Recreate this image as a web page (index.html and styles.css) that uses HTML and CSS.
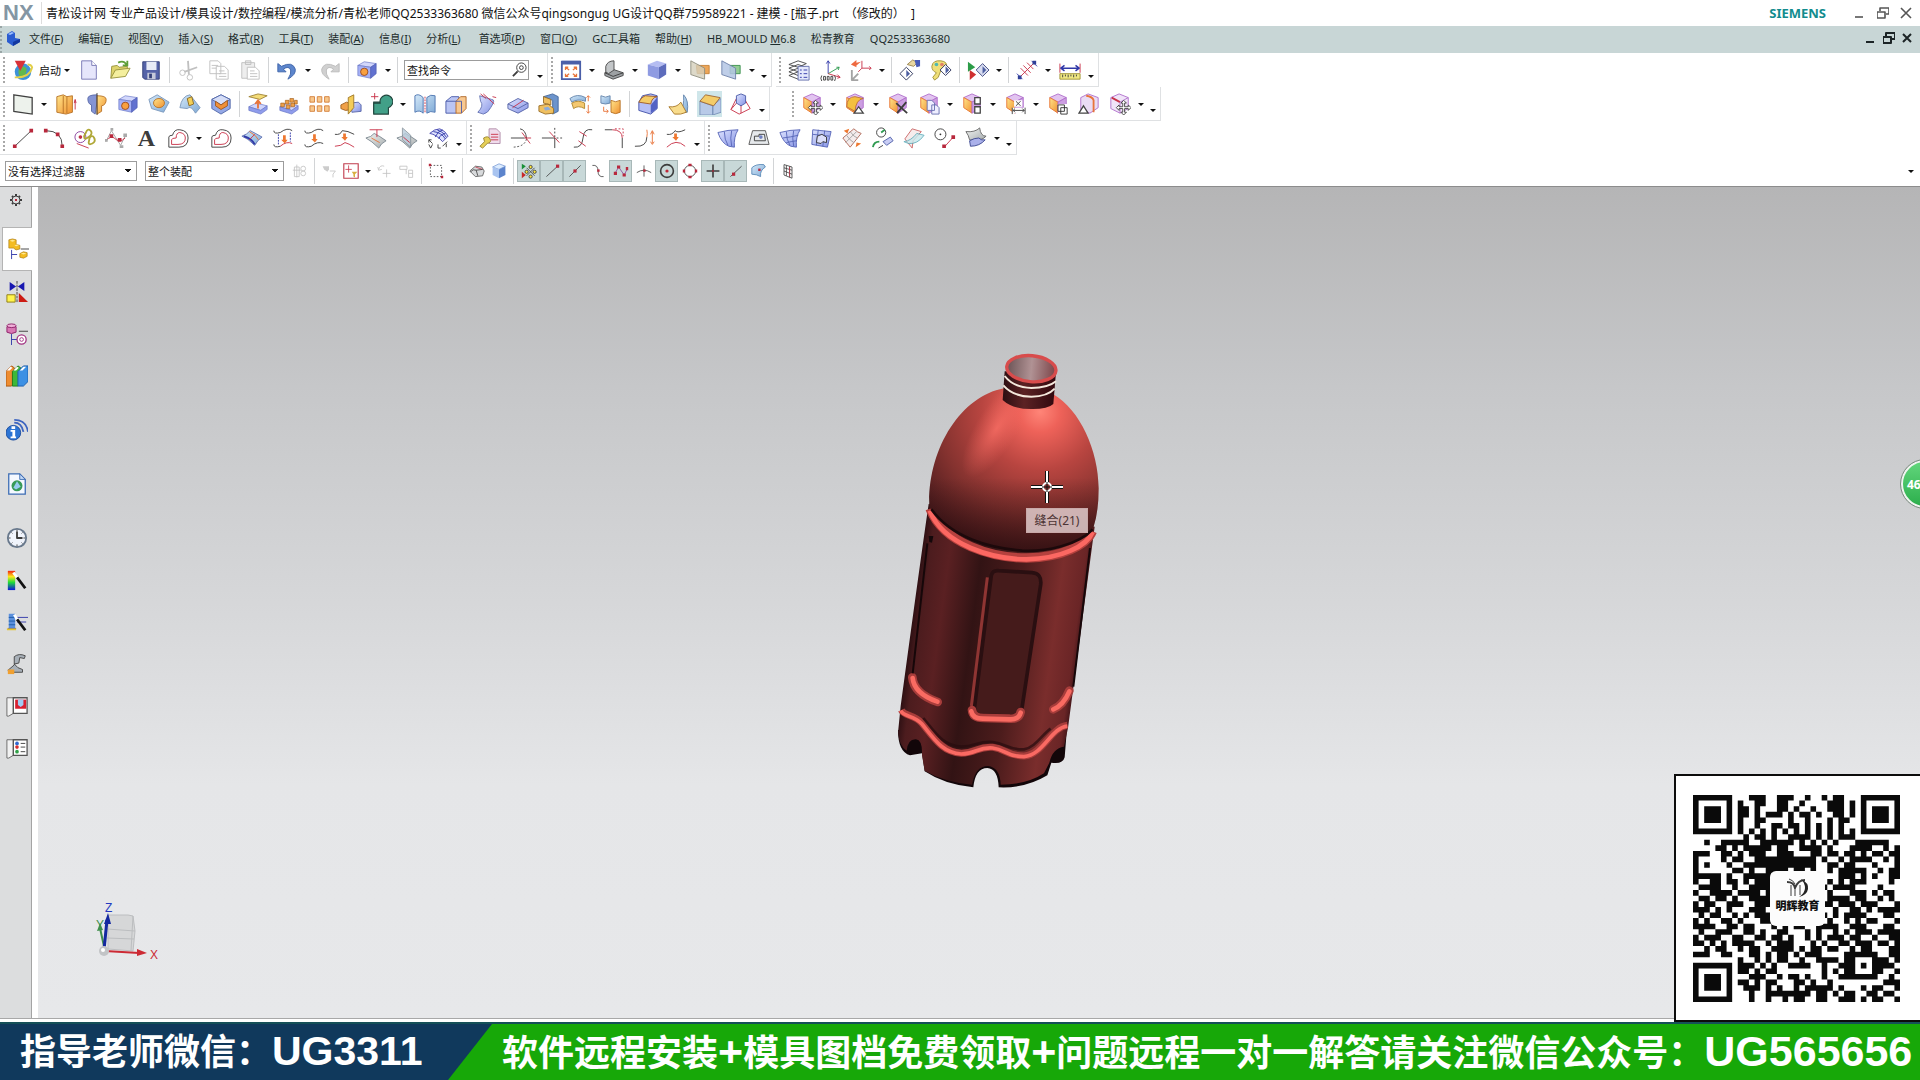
FILE: index.html
```html
<!DOCTYPE html>
<html lang="zh-CN">
<head>
<meta charset="utf-8">
<title>NX - 建模 - 瓶子.prt</title>
<link rel="stylesheet" href="styles.css">
</head>
<body>
<svg class="defs" aria-hidden="true">
  <defs>
    <linearGradient id="gBlue" x1="0" y1="0" x2="1" y2="1"><stop offset="0" stop-color="#dfe4ff"/><stop offset="1" stop-color="#8492e4"/></linearGradient>
    <linearGradient id="gOrange" x1="0" y1="0" x2="1" y2="1"><stop offset="0" stop-color="#ffe58a"/><stop offset="1" stop-color="#f09030"/></linearGradient>
    <linearGradient id="gSky" x1="0" y1="0" x2="1" y2="1"><stop offset="0" stop-color="#d4e8f8"/><stop offset="1" stop-color="#7faad6"/></linearGradient>
    <linearGradient id="gGrey" x1="0" y1="0" x2="1" y2="1"><stop offset="0" stop-color="#f4f6f4"/><stop offset="1" stop-color="#a4aaac"/></linearGradient>
    <linearGradient id="gRainbow" x1="0" y1="0" x2="0" y2="1"><stop offset="0" stop-color="#f02010"/><stop offset=".3" stop-color="#ffe81c"/><stop offset=".6" stop-color="#20dc38"/><stop offset="1" stop-color="#1010e0"/></linearGradient>
  </defs>
  <symbol id="cube" viewBox="0 0 24 24"><path fill="#d2d7fc" stroke="#6674c4" stroke-width=".7" d="M2 7 9 3l13 2-6 4z"/><path fill="#a6b1f6" stroke="#6674c4" stroke-width=".7" d="m2 7 14 2v12L2 18z"/><path fill="#6272d0" stroke="#4c5ab0" stroke-width=".7" d="m16 9 6-4v11l-6 5z"/></symbol>
  <symbol id="hex" viewBox="0 0 24 24"><path fill="#e2c4f0" stroke="#b070cc" d="m12 1 9 4-9 5-9-5z"/><path fill="url(#gOrange)" stroke="#e87838" d="m3 5 9 5v12l-9-6z"/><path fill="#cc9ee2" stroke="#b070cc" d="m12 10 9-5v11l-9 6z"/></symbol>
  <symbol id="slab" viewBox="0 0 24 24"><path fill="#d0d5fc" stroke="#6674c4" stroke-width=".7" d="m2 15 8-4 12 3-7 5z"/><path fill="#8f9cec" stroke="#6674c4" stroke-width=".7" d="m2 15 13 4 7-5v4l-7 5-13-4z"/></symbol>
  <symbol id="move" viewBox="0 0 24 24"><path fill="#fff" stroke="#444" d="m16 8 3 3h-2v4h4v-2l3 3-3 3v-2h-4v4h2l-3 3-3-3h2v-4h-4v2l-3-3 3-3v2h4v-4h-2z"/></symbol>
</svg>

<header class="titlebar">
  <span class="nx">NX</span>
  <h1 class="caption">青松设计网 专业产品设计/模具设计/数控编程/模流分析/青松老师QQ2533363680 微信公众号qingsongug UG设计QQ群759589221 - 建模 - [瓶子.prt  （修改的）  ]</h1>
  <span class="brand">SIEMENS</span>
  <div class="winbtns">
    <button title="最小化"><svg viewBox="0 0 12 12"><path class="ln" d="M1 10h8"/></svg></button>
    <button title="还原"><svg viewBox="0 0 12 12"><path class="ln" d="M3 4V1h9v6H9M0 5h8v6H0z"/></svg></button>
    <button title="关闭"><svg viewBox="0 0 12 12"><path class="ln" d="m1 1 10 10M11 1 1 11"/></svg></button>
  </div>
</header>

<nav class="menubar">
  <svg class="part" viewBox="0 0 16 16"><path fill="#2b5cd0" d="m2 4 5-3 3 2v5l5 1v3l-7 4-6-4z"/><path fill="#9ec0ff" d="m3 4 4-2 2 1-4 2z"/><path fill="#1438a0" d="m10 11 5-2v3l-7 4v-4z"/></svg>
  <button>文件(<u>F</u>)</button><button>编辑(<u>E</u>)</button><button>视图(<u>V</u>)</button><button>插入(<u>S</u>)</button><button>格式(<u>R</u>)</button><button>工具(<u>T</u>)</button><button>装配(<u>A</u>)</button><button>信息(<u>I</u>)</button><button class="wide">分析(<u>L</u>)</button><button>首选项(<u>P</u>)</button><button>窗口(<u>O</u>)</button><button>GC工具箱</button><button>帮助(<u>H</u>)</button><button>HB_MOULD <u>M</u>6.8</button><button>松青教育</button><button>QQ2533363680</button>
  <div class="winbtns dark">
    <button title="最小化窗口"><svg viewBox="0 0 12 12"><path class="ln" d="M1 10h8"/></svg></button>
    <button title="还原窗口"><svg viewBox="0 0 12 12"><path class="ln" d="M3 4V1h9v6H9M0 5h8v6H0z"/></svg></button>
    <button title="关闭窗口"><svg viewBox="0 0 12 12"><path class="ln" d="m2 2 8 8M10 2l-8 8"/></svg></button>
  </div>
</nav>

<div class="bars">
  <div class="row">
    <div class="toolbar">
      <i class="grip"></i>
      <button class="start"><svg viewBox="0 0 24 24"><circle cx="12" cy="14" r="9" fill="#3d92d8"/><path fill="#62b84c" d="M8 9q6-3 8 2 0 6-5 10-6-3-3-12z"/><path fill="none" stroke="#e3cf48" stroke-width="2" d="M3 20q16 1 19-11-1-3-5-3"/><path fill="#d83238" d="m3 2 12 0-6 11z"/></svg><span>启动</span></button><button class="drop" title="启动菜单"></button>
      <button class="tool" title="新建"><svg viewBox="0 0 24 24"><path fill="#e6e6fb" stroke="#7676b4" d="M4 2h11l5 5v15H4z"/><path fill="#fff" stroke="#7676b4" d="M15 2v5h5"/></svg></button>
      <button class="tool" title="打开"><svg viewBox="0 0 24 24"><path fill="#ded46c" stroke="#97933c" d="M2 21 3 8l6-1 2 2 9-1v4"/><path fill="#f4ef9e" stroke="#97933c" d="m2 21 5-9 16-2-5 9z"/><path fill="none" stroke="#5d9e38" stroke-width="2" d="M10 4q6-3 9 2m1-4v5h-5"/></svg></button>
      <button class="tool" title="保存"><svg viewBox="0 0 24 24"><path fill="#5563a8" stroke="#333f78" d="M3 3h18v19H5l-2-2z"/><path fill="#e8ecf6" d="M7 3h11v9H7z"/><path fill="#c5c9da" d="M8 15h9v7H8z"/><path fill="#333f78" d="M10 16h3v5h-3z"/></svg></button>
      <i class="sep"></i>
      <button class="tool off" title="剪切"><svg viewBox="0 0 24 24"><circle class="ln" cx="6" cy="15" r="3"/><circle class="ln" cx="14" cy="20" r="3"/><path class="ln" stroke-width="2" d="m8 14 14-5M13 17 12 2"/></svg></button>
      <button class="tool off" title="复制"><svg viewBox="0 0 24 24"><path fill="#fff" class="ol" d="M2 2h9l3 3v11H2zM9 8h9l4 4v10H9z"/><path class="ln" d="M4 7h7M4 10h5M12 13h6M12 16h8M12 19h8"/></svg></button>
      <button class="tool off" title="粘贴"><svg viewBox="0 0 24 24"><path fill="#eee" class="ol" d="M3 4h14v17H3zM7 2h6v4H7z"/><path fill="#fff" class="ol" d="M9 9h9l4 4v9H9z"/><path class="ln" d="M12 13h5M12 16h8M12 19h8"/></svg></button>
      <i class="sep"></i>
      <button class="tool" title="撤消"><svg viewBox="0 0 24 24"><path fill="#5d86cc" stroke="#3c62a8" d="M2 5v9h9L8 11q6-4 8 1 1 4-3 10 9-5 8-11Q18 2 6 8z"/></svg></button><button class="drop" title="撤消列表"></button>
      <button class="tool off" title="重做"><svg viewBox="0 0 24 24"><path fill="#d0d0d0" stroke="#bbb" d="M22 5v9h-9l3-3q-6-4-8 1-1 4 3 10-9-5-8-11Q6 2 18 8z"/></svg></button>
      <i class="sep"></i>
      <button class="tool" title="特征"><svg viewBox="0 0 24 24"><use href="#cube"/><circle cx="9" cy="14" r="4" fill="#f8a040" stroke="#9a4a20"/></svg></button><button class="drop" title="特征列表"></button>
      <i class="sep"></i>
      <label class="search"><input type="text" value="查找命令" aria-label="查找命令"><svg viewBox="0 0 16 16"><circle class="ln" cx="10" cy="6" r="5"/><circle class="ln" cx="10" cy="6" r="2"/><path class="ln" stroke-width="2" d="m6 10-5 5"/></svg></label>
      <button class="drop more" title="工具条选项"></button>
    </div>
    <div class="toolbar">
      <i class="grip"></i>
      <button class="tool" title="适合窗口"><svg viewBox="0 0 24 24"><path fill="#fff" stroke="#4a5ea8" stroke-width="2" d="M2 3h20v19H2z"/><path fill="#4a5ea8" d="M2 2h20v4H2z"/><path class="ln or" stroke-width="1.4" d="M6 12V9h3M15 9h3v3M18 16v3h-3M9 19H6v-3M6 9l4 3M18 9l-4 3M18 19l-4-3M6 19l4-3"/></svg></button><button class="drop" title="缩放"></button>
      <button class="tool" title="定向视图"><svg viewBox="0 0 24 24"><path fill="#9da1a4" stroke="#484848" d="m2 15 8-4 12 4v3l-11 4-9-4z"/><path fill="#c3c6c8" stroke="#484848" d="M3 14V8q2-6 9-6v10l-6 4z"/><path class="ln" d="m2 15 9 4 11-4"/></svg></button><button class="drop" title="视图方向"></button>
      <button class="tool" title="着色"><svg viewBox="0 0 24 24"><path fill="#b5bdf2" d="m2 6 10-4 10 3-8 4z"/><path fill="#8f9be2" d="m2 6 12 3v13L2 18z"/><path fill="#5d6cbc" d="m14 9 8-4v12l-8 5z"/></svg></button><button class="drop" title="渲染样式"></button>
      <button class="tool" title="剪切截面"><svg viewBox="0 0 24 24"><path fill="#eda658" stroke="#c78238" d="M8 7h14v9H9z"/><path fill="#d4d0bc" fill-opacity=".8" stroke="#908f80" d="m2 2 15 8v12L2 17z"/></svg></button>
      <button class="tool" title="编辑截面"><svg viewBox="0 0 24 24"><path fill="#92cd92" stroke="#3c9050" d="M11 7h11v9H11z"/><path fill="#b4c6e4" fill-opacity=".85" stroke="#7082aa" d="m2 2 15 8v12L2 17z"/></svg></button><button class="drop" title="截面列表"></button>
      <button class="drop more" title="工具条选项"></button>
    </div>
    <div class="toolbar apart">
      <i class="grip"></i>
      <button class="tool" title="图层设置"><svg viewBox="0 0 24 24"><path fill="#fff" stroke="#484848" d="m1 18 10-4 9 3-9 5zM1 14l10-4 9 3-9 5zM1 10l10-4 9 3-9 5zM1 6l10-4 9 3-9 4z"/><path fill="#e4e8fc" stroke="#6570ac" d="M11 8h12v15H11z"/><path class="ln bl" d="M13 12h2m2 0h4M13 16h2m2 0h4M13 20h2m2 0h4"/></svg></button>
      <button class="tool" title="WCS"><svg viewBox="0 0 24 24"><path class="ln bl" d="M10 16V2m-2 3 2-3 2 3"/><path class="ln gn" d="m10 16 12-7m-3 0h3l-1 3"/><path class="ln rd" d="m10 16 13 4m-3-3 3 3-3 1"/><path class="ln" d="M3 18q-2 3 0 6M17 18q2 3 0 6M5 19v4h2v-4zM9 19v4h2v-4zM13 19v4h2v-4z"/></svg></button>
      <button class="tool" title="定向 WCS"><svg viewBox="0 0 24 24"><path class="ln rd" d="M13 10V2m0 8h10m-2-2 2 2-2 2M13 10l-4 4"/><path fill="#ee6a40" d="m1 6 6-5v3l5-1-5 4v2z"/><path class="ln gy" stroke-width="2" d="M2 12v11h7M2 23l7-7"/></svg></button><button class="drop" title="WCS 列表"></button>
      <i class="sep"></i>
      <button class="tool" title="显示"><svg viewBox="0 0 24 24"><path fill="#fff" stroke="#283058" d="m8 9 7 7-7 7-7-7z"/><path fill="#4c5ea0" d="m8 12 4 4-4 4z"/><path fill="#ead8a0" stroke="#9a8450" d="m9 6 6-5 5 3-4 4z"/><path fill="#4a5cb8" d="m17 1 6 0v7l-4 1z"/></svg></button>
      <button class="tool" title="编辑对象显示"><svg viewBox="0 0 24 24"><path fill="#efdf78" stroke="#a09038" d="M2 8Q3 1 12 2q7 1 6 6l-6 4-3 8-4 3-2-3 4-5Q2 13 2 8z"/><circle cx="7" cy="6" r="2" fill="#50b8b0"/><circle cx="13" cy="6" r="2" fill="#e08068"/><path fill="#fff" stroke="#283058" d="m17 6 6 6-6 6-6-6z"/><path fill="#4c5ea0" d="m17 8 4 4-4 4z"/></svg></button>
      <i class="sep"></i>
      <button class="tool" title="移动对象"><svg viewBox="0 0 24 24"><path fill="#2c9c48" d="m1 3 8 6-8 5z"/><path fill="#cf3030" d="m3 12 7 5-7 6z"/><path fill="#d8dcf0" stroke="#404880" d="m17 5 7 7-7 7-7-7z"/><path fill="#4c5ea0" d="m17 8 4 4-4 4z"/></svg></button><button class="drop" title="移动列表"></button>
      <i class="sep"></i>
      <button class="tool" title="测量距离"><svg viewBox="0 0 24 24"><path class="ln rd" d="m5 19 15-15M5 10l8 8M8 7l8 8M12 4l7 7"/><path class="ln bl" d="m1 16 6 6m10-20 6 6"/><path fill="#304098" d="M2 18h4v4H2zM18 2h4v4h-4z"/></svg></button><button class="drop" title="测量列表"></button>
      <button class="tool" title="尺寸"><svg viewBox="0 0 24 24"><path fill="#f0e884" stroke="#a09434" d="M1 16h22v6H1z"/><path class="ln" d="M4 17v3m3-3v2m3-2v3m3-3v2m3-2v3m3-3v2"/><path class="ln rd" d="M1 5v10M23 5v10"/><path class="ln bl" stroke-width="1.6" d="M3 10h18M6 7l-4 3 4 3m12-6 4 3-4 3"/></svg></button>
      <button class="drop more" title="工具条选项"></button>
    </div>
  </div>

  <div class="row">
    <div class="toolbar">
      <i class="grip"></i>
      <button class="tool" title="草图"><svg viewBox="0 0 24 24"><path fill="#edf2ec" stroke="#404040" stroke-width="1.4" d="m2 2 20 3v18L2 20z"/></svg></button><button class="drop" title="草图列表"></button>
      <button class="tool" title="拉伸"><svg viewBox="0 0 24 24"><path fill="url(#gOrange)" stroke="#b87428" d="m2 4 7-2 4 2 6-1v18l-7 2-10-2z"/><path stroke="#b87428" d="M9 3v19M13 4v18"/><path class="ln rd" d="M22 18V8m-1 3 1-4 1 4"/></svg></button>
      <button class="tool" title="旋转"><svg viewBox="0 0 24 24"><path fill="#8494d4" stroke="#5a6aa8" d="M2 6q0-4 10-4v8l-2 13-4-3V13q-4-1-4-7z"/><path fill="url(#gOrange)" stroke="#b87428" d="M12 3q10 0 10 4 0 6-5 7v6l-5 3z"/><path class="ln" d="M12 0v24"/></svg></button>
      <button class="tool" title="孔"><svg viewBox="0 0 24 24"><use href="#cube"/><circle cx="9" cy="14" r="4" fill="#f8a040" stroke="#9a4a20"/></svg></button>
      <button class="tool" title="凸台"><svg viewBox="0 0 24 24"><path fill="url(#gSky)" stroke="#7c98bc" d="m1 7 9-5 13 8-6 11-13-4z"/><ellipse cx="12" cy="11" rx="6" ry="5" fill="url(#gOrange)" stroke="#b87428"/></svg></button>
      <button class="tool" title="垫块"><svg viewBox="0 0 24 24"><path fill="url(#gSky)" stroke="#7c98bc" d="M1 16Q3 3 12 2l11 14-5 6q-5-9-9-5z"/><path fill="#f4d058" stroke="#8a6820" d="m9 6 5-2 2 8-5 2z"/></svg></button>
      <button class="tool" title="腔体"><svg viewBox="0 0 24 24"><path fill="#94a8e6" stroke="#5066a8" d="m2 7 10-5 10 5v10l-10 6-10-6z"/><path fill="#d6def8" stroke="#5066a8" d="m2 7 10-5 10 5-10 6z"/><path fill="#f09038" stroke="#a05820" d="m6 9 6 4 7-5v6l-7 4-6-4z"/></svg></button>
      <i class="sep"></i>
      <button class="tool" title="拔模体"><svg viewBox="0 0 24 24"><use href="#slab"/><path fill="#f4dc78" stroke="#a08438" d="m2 4 10-3 10 2-8 4z"/><path class="ln or" stroke-width="2" d="M12 17V9M9 12l3-4 3 4"/></svg></button>
      <button class="tool" title="凸起阵列"><svg viewBox="0 0 24 24"><use href="#slab"/><path fill="#f0a048" stroke="#a06020" stroke-width=".7" d="M3 11h4v4H3zM8 8h4v4H8zM13 6h4v4h-4zM9 13h4v4H9zM14 11h4v4h-4zM18 8h3v4h-3z"/></svg></button>
      <button class="tool" title="阵列特征"><svg viewBox="0 0 24 24"><path fill="#f8c88c" stroke="#d4803c" d="M1 4h5v6H1zM9 4h5v6H9zM17 4h5v6h-5zM1 14h5v6H1zM9 14h5v6H9zM17 14h5v6h-5z"/></svg></button>
      <button class="tool" title="镜像特征"><svg viewBox="0 0 24 24"><path fill="url(#gBlue)" stroke="#5866a8" d="m12 11 8-1 3 3v7l-10 1z"/><path fill="#f0a048" stroke="#a06020" d="m1 13 6-3 6 2v6l-7 1-5-2z"/><path fill="#f4cc58" stroke="#a07828" d="m9 5 6-3v14l-6 7z"/></svg></button>
      <button class="tool" title="求和"><svg viewBox="0 0 24 24"><path fill="#42a088" stroke="#20443c" stroke-width="1.2" d="M3 10h8v12H3z"/><path fill="#42a088" stroke="#20443c" stroke-width="1.2" d="M3 11h7a7 7 0 1 1 9 5v7H3z"/><path class="ln rd" d="M4 0v7M0 4h8"/></svg></button><button class="drop" title="布尔运算"></button>
      <button class="tool" title="缝合"><svg viewBox="0 0 24 24"><path fill="url(#gSky)" stroke="#4c74b0" d="M1 3q4-3 9 2v17q-4-4-9-1zM14 5q4-4 9-2v18q-5-2-9 1z"/><path class="ln rd" stroke-dasharray="2 1" d="M12 4v18"/></svg></button>
      <button class="tool" title="分割面"><svg viewBox="0 0 24 24"><path fill="#bac5f4" stroke="#4c5ca8" d="M1 9 7 4h8v14l-3 4H1z"/><path fill="#f8c890" stroke="#b06828" d="m12 9 5-5h6v13l-5 5h-6z"/><path stroke="#4c5ca8" d="M1 9h17M18 9v13"/></svg></button>
      <button class="tool" title="修剪体"><svg viewBox="0 0 24 24"><path fill="url(#gBlue)" stroke="#6674b4" d="m4 3 13 4q5 0-1 9-3 6-8 7l-6-2q7-7 3-12z"/><path class="ln rd" d="m8 1 12 11M5 1l6 5M18 4l4 1"/></svg></button>
      <button class="tool" title="拆分体"><svg viewBox="0 0 24 24"><path fill="url(#gBlue)" stroke="#5866a8" d="m1 12 11-6 11 5v5l-11 6-11-5z"/><path stroke="#5866a8" d="m1 12 11 5 11-6" fill="none"/><path class="ln rd" d="m6 16 12-8"/></svg></button>
      <button class="tool" title="抽壳"><svg viewBox="0 0 24 24"><path fill="#6c94cc" stroke="#44689c" d="m6 4 10-3 6 3v16l-6 3V8z"/><path fill="#f0c060" stroke="#9a7028" d="m6 4 8 3v6l-8-2zM1 14l10-2 6 5v5l-9 1-7-3z"/><path fill="#8cacdc" d="m6 16 5-1 3 3-6 1z"/></svg></button>
      <button class="tool" title="加厚"><svg viewBox="0 0 24 24"><path fill="url(#gSky)" stroke="#6484ac" d="M1 6q8-6 17-1v4Q9 6 3 10z"/><path fill="#f4c870" stroke="#b08830" d="M3 11q7-4 14 0v6q-7-4-12 0z"/><path class="ln or" d="M21 3v6m0 4v9m-2-2 2 2 2-2m-4-15 2-2 2 2"/></svg></button>
      <button class="tool" title="包容"><svg viewBox="0 0 24 24"><path fill="url(#gSky)" stroke="#6484ac" d="M1 3q5 3 10 0v8q-5 2-10 0z"/><path fill="url(#gOrange)" stroke="#b87428" d="M12 8q5 3 10 0v13q-5 3-10 0z"/><path class="ln or" d="M4 15v5h5m-2-2 2 2-2 2"/></svg></button>
      <i class="sep"></i>
      <button class="tool" title="边倒圆"><svg viewBox="0 0 24 24"><path fill="#b5bff6" stroke="#4452a8" d="m2 10 4-7 9-2 7 2v14l-7 6-13-4z"/><path fill="#f4cc68" stroke="#a05c28" d="M2 10Q5 4 9 3l13 1q-6 1-7 8z"/><path fill="#5362c4" d="m15 13 7-8v12l-7 5z"/></svg></button>
      <button class="tool" title="面倒圆"><svg viewBox="0 0 24 24"><path fill="url(#gSky)" stroke="#6484ac" d="M17 2q6 6 4 19l-8 0q5-6 4-19z"/><path fill="#f8dc8c" stroke="#a87828" d="M1 15q9 1 13-5l6 11q-6 3-13 2z"/></svg></button>
      <button class="tool picked" title="倒斜角"><svg viewBox="0 0 24 24"><path fill="#b8cae8" stroke="#7890b8" d="M1 9v15h14V14zM15 14v10l9-3V6z"/><path fill="#f4cc68" stroke="#a06838" d="m1 9 6-7 16 3-7 9z"/></svg></button>
      <button class="tool" title="拔模"><svg viewBox="0 0 24 24"><path class="ln rd" d="M7 6 1 18l9 5 12-6-6-10M8 10l-7 8M12 13v9"/><path fill="url(#gBlue)" stroke="#4c5ca8" d="m7 3 5-2 5 2v8l-5 3-5-3z"/></svg></button>
      <button class="drop more" title="工具条选项"></button>
    </div>
    <div class="toolbar far">
      <i class="grip"></i>
      <button class="tool" title="移动面"><svg viewBox="0 0 24 24"><use href="#hex"/><use href="#move"/></svg></button><button class="drop" title="移动面列表"></button>
      <button class="tool" title="调整圆角"><svg viewBox="0 0 24 24"><use href="#hex"/><path fill="#f4c040" stroke="#c07038" d="M3 15Q3 4 12 4l9 2q-8 1-9 14z"/><path fill="#fff" stroke="#444" stroke-width="1.4" d="m16 15 5 7H11z"/></svg></button><button class="drop" title="圆角列表"></button>
      <button class="tool" title="删除面"><svg viewBox="0 0 24 24"><use href="#hex"/><path class="ln" stroke-width="2" d="m10 11 12 11M21 10 11 22"/></svg></button>
      <button class="tool" title="复制面"><svg viewBox="0 0 24 24"><use href="#hex"/><path fill="#eef" stroke="#6870b0" d="M10 8h5l3 3v8h-8zM15 13h5l3 3v7h-8z"/></svg></button><button class="drop" title="复制面列表"></button>
      <button class="tool" title="设为共面"><svg viewBox="0 0 24 24"><use href="#hex"/><path fill="#fff" stroke="#444" stroke-width="1.4" d="M15 5h6v7h-6zM15 15h6v7h-6z"/></svg></button><button class="drop" title="共面列表"></button>
      <button class="tool" title="线性尺寸"><svg viewBox="0 0 24 24"><use href="#hex"/><path fill="#fff" d="M11 8h9v7h-9zM9 16h14v6H9z"/><path class="ln" d="m13 9 5 5m0-5-5 5M9 16v7m14-7v7M10 19h12m-10-2-2 2 2 2m8-4 2 2-2 2"/></svg></button><button class="drop" title="尺寸列表"></button>
      <button class="tool" title="组合面"><svg viewBox="0 0 24 24"><use href="#hex"/><path fill="#fff" d="M12 12h10v11H12z"/><path fill="none" stroke="#333" d="M12 13h7v7h-7zM15 16h7v7h-7z"/></svg></button>
      <button class="tool" title="优化面"><svg viewBox="0 0 24 24"><path fill="#eadcf4" stroke="#b070cc" d="m3 5 8-4 11 4v11l-9 6-10-4z"/><path class="ln or" stroke-width="2" d="M9 3q7 1 8 5v13"/><path fill="#fff" stroke="#444" stroke-width="1.4" d="m6 14 5 8H1z"/></svg></button>
      <button class="tool" title="移动边"><svg viewBox="0 0 24 24"><path fill="#f0e4f8" stroke="#b070cc" d="m2 5 9-4 10 4v12l-9 5-10-5z"/><path class="ln rd" stroke-width="2" d="m3 5 9 5"/><path stroke="#b070cc" d="M12 10v12m0-12 9-5"/><use href="#move"/></svg></button><button class="drop" title="移动边列表"></button>
      <button class="drop more" title="工具条选项"></button>
    </div>
  </div>

  <div class="row">
    <div class="toolbar">
      <i class="grip"></i>
      <button class="tool" title="直线"><svg viewBox="0 0 24 24"><path class="ln" d="M3 21 21 4"/><path class="dot" d="M1 19h4v4H1zM19 2h4v4h-4z"/></svg></button>
      <button class="tool" title="圆弧"><svg viewBox="0 0 24 24"><path class="ln" d="M3 4q18 0 18 17"/><path class="dot" d="M1 2h4v4H1zM14 6h4v4h-4zM19 19h4v4h-4z"/></svg></button>
      <button class="tool" title="关联曲线"><svg viewBox="0 0 24 24"><circle cx="7" cy="11" r="6" class="ln pu"/><circle cx="7" cy="11" r="2" fill="#c03048"/><path fill="none" stroke="#b0a838" stroke-width="2" d="M13 6q2-5 5-2t-2 7-5-1zM17 12q3-4 5 0t-2 6-4-1z"/><path class="ln rd" d="m3 18 13 5"/></svg></button>
      <button class="tool" title="艺术样条"><svg viewBox="0 0 24 24"><path class="ln gy" d="m1 16 6-12 10 16 6-12"/><path class="ln rd" d="M1 15q6-6 9-3 6 6 12 0"/><path class="dot" d="M5 8h4v4H5zM14 12h4v4h-4z"/><path fill="#aaa" d="M6 1h3v3H6zM20 7h4v4h-4zM16 20h4v3h-4zM0 13h3v3H0z"/></svg></button>
      <button class="tool letter" title="文本">A</button>
      <button class="tool" title="偏置曲线"><svg viewBox="0 0 24 24"><path class="ln" d="M2 22V11q0-2 4-2 2-7 8-6 9 1 9 9 0 10-10 10z"/><path class="ln rd" d="M5 19v-5q0-2 5-2 0-6 4-6 6 1 6 6 0 7-8 7z"/></svg></button><button class="drop" title="偏置列表"></button>
      <button class="tool" title="面内偏置"><svg viewBox="0 0 24 24"><path class="ln" d="M2 22V11q0-2 4-2 2-7 8-6 9 1 9 9 0 10-10 10z"/><path class="ln rd" d="M5 19v-5q0-2 5-2 0-6 4-6 6 1 6 6 0 7-8 7z"/></svg></button>
      <button class="tool" title="在面上偏置"><svg viewBox="0 0 24 24"><path fill="url(#gSky)" stroke="#6674b4" d="M1 10q6-2 9-6 6 3 13 7-5 3-8 9Q7 12 1 10z"/><path class="ln or" d="M9 5q8 4 10 9"/><path class="ln bl" stroke-width="2" d="M3 10q9 3 12 9"/><path class="ln rd" d="m9 14 6-6"/></svg></button>
      <button class="tool" title="桥接曲线"><svg viewBox="0 0 24 24"><path class="ln" d="M2 4q0 4 7 2 8-6 13-2M2 19q0 4 7 2"/><path class="ln rd" d="M9 21q7-6 13-3"/><path class="ln bl" stroke-dasharray="2 1" d="M7 8v11M20 6v10"/><path fill="#ee7830" d="M12 9h3v5h2l-3 4-4-4h2z"/></svg></button>
      <button class="tool" title="投影曲线"><svg viewBox="0 0 24 24"><path class="ln" d="M2 4q0 4 7 2 8-6 13-2M2 19q0 4 7 2 7-6 13-3"/><path fill="#ee7830" d="M11 8h3v5h2l-3 4-4-4h2z"/></svg></button>
      <button class="tool" title="组合投影"><svg viewBox="0 0 24 24"><path class="ln" d="M1 8q6 1 8-4 6 0 13 4"/><path class="ln rd" d="M1 21q7 0 11-4 4 1 10 5"/><path fill="#ee7830" d="M10 7h3v4h2l-3 4-4-4h2z"/></svg></button>
      <button class="tool" title="投影到面"><svg viewBox="0 0 24 24"><path fill="url(#gGrey)" stroke="#7c8890" d="M1 12q6-1 9-5 6 3 13 8-6 3-8 8-8-8-14-11z"/><path class="ln or" d="m7 12 9 5"/><path class="ln rd" d="M5 3h14M13 3v8"/></svg></button>
      <button class="tool" title="相交曲线"><svg viewBox="0 0 24 24"><path fill="url(#gGrey)" stroke="#7c8890" d="M1 12q6-1 9-5 6 3 13 8-6 3-8 8-8-8-14-11z"/><path fill="#b8ccdc" stroke="#7c8890" d="m7 1 9 8v13l-9-8z" opacity=".8"/><path class="ln rd" d="m8 11 7 6"/></svg></button>
      <button class="tool" title="等参数曲线"><svg viewBox="0 0 24 24"><path fill="#dce0fc" stroke="#4848b0" d="M3 7Q8 2 14 2q6 2 9 8l-6 6Q10 8 3 7z"/><path class="ln bl" d="M7 5q9 1 13 8M11 3q7 2 10 8M9 11q2-6 8-8M13 13q1-5 7-6"/><path class="ln" d="m2 14 4 4m-4-1v-3h3M22 16l-5 5m4 1v-4M2 19l2 4 2-4M12 19v4h3"/></svg></button>
      <button class="drop more" title="工具条选项"></button>
    </div>
    <div class="toolbar">
      <i class="grip"></i>
      <button class="tool" title="编辑参数"><svg viewBox="0 0 24 24"><path fill="#f0dcec" stroke="#b08ca8" d="M11 2h8l4 4v12H11z"/><path class="ln rd" d="M13 8h8m-8 3h8m-8 3h8"/><path fill="#e6cf58" stroke="#9a8430" d="M5 12q5-3 7 1t-3 5l-5 5-3-2 5-5z"/></svg></button>
      <button class="tool" title="修剪曲线"><svg viewBox="0 0 24 24"><path class="ln" d="M1 12h15M11 2q6 1 7 10"/><path class="ln" stroke-dasharray="2 2" d="M18 13q-2 9-16 9"/><path class="ln rd" d="M16 12h7M13 6l9 12"/></svg></button>
      <button class="tool" title="修剪拐角"><svg viewBox="0 0 24 24"><path class="ln" d="M1 12h14M15 12v11"/><path class="ln" stroke-dasharray="2 2" d="M15 1v10m2 1h6"/><path class="ln rd" d="m9 5 11 12"/></svg></button>
      <button class="tool" title="分割曲线"><svg viewBox="0 0 24 24"><path class="ln" d="M2 22q9 1 10-10T22 3"/><path class="ln rd" d="m7 15 8 6M8 5l8 5"/></svg></button>
      <button class="tool" title="圆角"><svg viewBox="0 0 24 24"><path class="ln" d="M2 3h8M21 12v11"/><path class="ln rd" d="M10 3q11 0 11 9"/><path class="ln rd" stroke-dasharray="2 2" d="M13 2h9v8"/></svg></button>
      <button class="tool" title="拉长曲线"><svg viewBox="0 0 24 24"><path class="ln" d="M1 21q13 1 13-10"/><path class="ln or" d="M14 11q1-4 0-8M20 5v13m-2-10 2-4 2 4m-4 8 2 3 2-3"/></svg></button>
      <button class="tool" title="光顺样条"><svg viewBox="0 0 24 24"><path class="ln" d="M2 8q6 1 9-4 3 3 11-1"/><path class="ln rd" d="M2 22q10-10 20-1"/><path fill="#ee7830" d="M10 7h3v4h2l-3 4-4-4h2z"/></svg></button>
      <button class="drop more" title="工具条选项"></button>
    </div>
    <div class="toolbar">
      <i class="grip"></i>
      <button class="tool" title="直纹"><svg viewBox="0 0 24 24"><path fill="url(#gBlue)" stroke="#5866b8" d="M1 6q11-3 22-3-5 8-4 19l-6-1Q5 18 1 6z"/><path stroke="#5866b8" fill="none" d="M8 5q0 9 4 15M16 4q-2 8 0 17"/></svg></button>
      <button class="tool" title="有界平面"><svg viewBox="0 0 24 24"><path fill="#e6e9ec" stroke="#555" d="m5 4 14 0 4 15H1z"/><path class="ln" d="M7 15v-5h5V8h6l1 7z"/><circle cx="14" cy="11" r="2" fill="#7080c0"/></svg></button>
      <button class="tool" title="通过曲线网格"><svg viewBox="0 0 24 24"><path fill="url(#gBlue)" stroke="#5866b8" d="M1 6q11-3 22-3-5 8-4 19l-6-1Q5 18 1 6z"/><path stroke="#5866b8" fill="none" d="M8 5q0 9 4 15M16 4q-2 8 0 17M4 12q9-1 17-3M8 17q5-1 11-2"/></svg></button>
      <button class="tool" title="N 边曲面"><svg viewBox="0 0 24 24"><path fill="url(#gBlue)" stroke="#5866b8" d="m3 3 20 2-4 17-17-3z"/><path stroke="#5866b8" d="m3 8 18 2M9 3 7 20m9-16-2 17"/><path fill="#dcdffa" stroke="#333" d="m7 17 1-7 5-2 5 3v6l-4-1-2 2z"/></svg></button>
      <button class="tool" title="扫掠"><svg viewBox="0 0 24 24"><path fill="#f4ecec" stroke="#b06858" d="M2 12 14 2q4 4 8 5L10 22q-5-6-8-10z"/><path class="ln gy" d="M6 9q4 6 8 8M10 5q4 6 8 7M5 17 17 5"/><path fill="#ee7830" d="m3 4 6-2-2 5zM22 18l-6 4 1-5z"/></svg></button>
      <button class="tool" title="剖切曲面"><svg viewBox="0 0 24 24"><circle class="ln" cx="10" cy="6" r="5"/><path class="ln gn" stroke-width="2" d="m10 6 4-3M1 22q1-6 7-6"/><path fill="#c8ccf4" stroke="#5060a8" d="m12 16 8-5 3 4-7 5z"/><path class="ln" d="m7 23 5-3"/></svg></button>
      <button class="tool" title="延伸曲面"><svg viewBox="0 0 24 24"><path fill="#f6ecec" stroke="#cc6868" d="m2 13 8-11 10 3-9 10-1 8z"/><path fill="#c8e8ec" stroke="#48a0b0" opacity=".8" d="M6 18q10 1 17-9l-8-2Q9 15 1 16z"/></svg></button>
      <button class="tool" title="圆角曲面"><svg viewBox="0 0 24 24"><circle class="ln" cx="7" cy="8" r="6"/><circle cx="7" cy="8" r="1" fill="#333"/><path class="ln rd" d="m12 21 9-10"/><path class="dot" d="M9 19h4v4H9zM19 9h4v4h-4z"/></svg></button>
      <button class="tool" title="偏置曲面"><svg viewBox="0 0 24 24"><path fill="url(#gGrey)" stroke="#666" d="M1 5q10 1 15-4 1 9 7 9-5 6-18 4-1-5-4-9z"/><path fill="#aab0ea" stroke="#3c4890" d="M5 15q5-3 10-3 3 3 7 2-6 7-16 7z"/></svg></button><button class="drop" title="偏置曲面列表"></button>
      <button class="drop more" title="工具条选项"></button>
    </div>
  </div>

  <div class="row selection">
    <select aria-label="选择过滤器"><option>没有选择过滤器</option></select>
    <select class="scope" aria-label="选择范围"><option>整个装配</option></select>
    <button class="mini off" title="装配约束"><svg viewBox="0 0 20 20"><path class="ln" d="M3 5h6v12H3zM1 9h10M6 2v16"/><circle class="ln" cx="14" cy="7" r="3"/><circle class="ln" cx="14" cy="13" r="3"/></svg></button>
    <i class="sep"></i>
    <button class="mini off" title="重置过滤器"><svg viewBox="0 0 20 20"><path fill="#ccc" d="M2 4h8v4l-2 3-4-3z"/><path class="ln" d="M11 10h7l-3 4v4"/></svg></button>
    <button class="mini" title="类选择"><svg viewBox="0 0 20 20"><path fill="#fff" stroke="#c03c4c" stroke-width="1.4" d="M1 1h18v18H1z"/><path class="ln rd" d="M7 3v9M3 8h8"/><path fill="#d8b040" d="M11 11h7l-3 3v4l-2-1v-3z"/></svg></button><button class="drop" title="类选择列表"></button>
    <button class="mini off" title="细节过滤"><svg viewBox="0 0 20 20"><path class="ln" d="M2 8q2-6 7-4m-8 1 1 4 4-1M12 8v10M7 13h10"/></svg></button>
    <button class="mini off" title="全不选"><svg viewBox="0 0 20 20"><path class="ln" d="M1 4h9v4H1zM12 9h5v9h-5zM12 13h5M9 8v6"/></svg></button>
    <i class="sep"></i>
    <button class="mini" title="矩形选择"><svg viewBox="0 0 20 20"><path class="ln" stroke-dasharray="2 2" d="M3 3h14v14H3z"/><path class="dot" d="M1 1h3v3H1zM16 16h3v3h-3z"/></svg></button><button class="drop" title="选择手势"></button>
    <i class="sep"></i>
    <button class="mini" title="高亮隐藏边"><svg viewBox="0 0 20 20"><path fill="#d8dadc" stroke="#555" d="M1 10 8 4l8 1 3 5-2 6-9 1z"/><path class="ln rd" d="m8 5 9 3"/><path class="ln" d="M2 11q3-4 7-2l2 7M9 9l8-1"/></svg></button>
    <button class="mini" title="着色高亮"><svg viewBox="0 0 20 20"><path fill="#dcecff" stroke="#7c9cd4" d="m2 5 8-4 8 3-8 4z"/><path fill="#a9c4f0" d="m2 5 8 3v11l-8-4z"/><path fill="#5c84cc" d="m10 8 8-4v11l-8 4z"/></svg></button>
    <i class="sep"></i>
    <button class="mini snap on" title="启用捕捉点"><svg viewBox="0 0 20 20"><path fill="#189038" d="m1 1 5 3-5 4z"/><path fill="#c82828" d="m1 11 5 4-5 4z"/><path class="ln" d="m7 6 10 10m0-10L7 16"/><circle cx="12" cy="5" r="2" class="yel"/><circle cx="7" cy="11" r="2" class="yel"/><circle cx="17" cy="11" r="2" class="yel"/><circle cx="12" cy="17" r="2" class="yel"/></svg></button><button class="mini snap on" title="端点"><svg viewBox="0 0 20 20"><path class="ln" d="M3 17 17 4"/><path class="dot" d="M15 2h4v4h-4z"/></svg></button><button class="mini snap on" title="中点"><svg viewBox="0 0 20 20"><path class="ln" d="M3 17 17 3"/><path class="dot" d="M8 8h4v4H8z"/></svg></button><button class="mini snap" title="控制点"><svg viewBox="0 0 20 20"><path class="ln" d="M3 3q7-1 7 7t7 7"/><path class="dot" d="M9 8h3v3H9z"/></svg></button><button class="mini snap on" title="极点"><svg viewBox="0 0 20 20"><path class="ln pu" d="m2 14 5-9 7 10 4-8"/><path class="dot" d="M1 11h4v4H1zM5 3h4v4H5zM12 13h4v4h-4zM16 5h3v4h-3z"/></svg></button><button class="mini snap" title="交点"><svg viewBox="0 0 20 20"><path class="ln" d="M1 12q9-6 18 0M10 3v14"/><path class="dot" d="M9 8h3v3H9z"/></svg></button><button class="mini snap on" title="圆心"><svg viewBox="0 0 20 20"><circle class="ln" cx="10" cy="10" r="8" stroke-width="2"/><circle cx="10" cy="10" r="2" fill="#c02838"/></svg></button><button class="mini snap" title="象限点"><svg viewBox="0 0 20 20"><circle class="ln" cx="10" cy="10" r="7"/><path class="dot" d="M8 1h4v3H8zM8 16h4v3H8zM1 8h3v4H1zM16 8h3v4h-3z"/></svg></button><button class="mini snap on" title="现有点"><svg viewBox="0 0 20 20"><path class="ln" stroke-width="2" d="M10 2v16M2 10h16"/><path class="dot" d="M9 9h2v2H9z"/></svg></button><button class="mini snap on" title="曲线上的点"><svg viewBox="0 0 20 20"><path class="ln" d="M3 17 17 4"/><path class="dot" d="M5 12h4v4H5z"/></svg></button><button class="mini snap" title="面上的点"><svg viewBox="0 0 20 20"><path fill="url(#gSky)" stroke="#4c80b0" d="M1 6q5-5 15-4l2 3q-7 4-6 12-5-3-11-3z"/><path class="dot" d="M9 7h3v3H9z"/></svg></button>
    <i class="sep"></i>
    <button class="mini" title="有界栅格"><svg viewBox="0 0 20 20"><path class="ln" d="m5 2 10 3v14L5 15zM8 3v13m4-12v14M5 6l10 3M5 10l10 4"/><path class="ln rd" d="M12 5v12"/></svg></button>
    <button class="drop last" title="选择条选项"></button>
  </div>
</div>

<main class="workspace">
  <aside class="resources">
    <button class="gear" title="资源条选项"><svg viewBox="0 0 14 14"><circle class="ln" cx="7" cy="7" r="4"/><path class="ln" stroke-width="2" d="M7 1v2m0 8v2M1 7h2m8 0h2M3 3l1 1m6 6 1 1m0-8-1 1m-6 6-1 1"/><path class="dot" d="M6 6h2v2H6z"/></svg></button>
    <button class="active" title="装配导航器"><svg viewBox="0 0 24 24"><path fill="#f4bc20" stroke="#a87810" stroke-width=".7" d="m2 2 4-1 4 1v5l4 1v4l-4 1-3-2-5 0zM14 17l4-2 4 1v4l-4 2-4-1z"/><path fill="#ffe890" d="m3 3 3-1 3 1-3 1zM8 8l3-1 2 1-3 1zM15 17l3-1 3 1-3 1z"/><path class="ln bl" d="M5 13v10m0-5h6"/><path class="ln" d="M15 12h9"/></svg></button>
    <button title="约束导航器"><svg viewBox="0 0 24 24"><path fill="#1818b0" d="M4 1v10l7-5zM20 1v10l-7-5z"/><path class="ln" stroke-dasharray="3 1" d="M12 0v24"/><path fill="#fff44c" stroke="#8c7c10" d="M1 15h9v8H1z"/><path fill="#cc1c14" d="M14 13v10h10z"/></svg></button>
    <button title="部件导航器"><svg viewBox="0 0 24 24"><path fill="#d878b4" stroke="#8c2068" d="M1 4v6q5 3 10 0V4z"/><ellipse cx="6" cy="3" rx="5" ry="2" fill="#f0b0d8" stroke="#8c2068"/><path class="ln bl" d="M6 12v12m0-6h6"/><path class="ln" d="M14 9h10"/><circle cx="17" cy="18" r="5" fill="#fff" stroke="#a03080" stroke-width="1.4"/><circle cx="17" cy="18" r="2" fill="#fff" stroke="#a03080"/></svg></button>
    <button class="spaced" title="重用库"><svg viewBox="0 0 24 24"><path fill="#ee8c30" stroke="#a85410" d="M0 7 6 1l3 2v17l-3 3H0z"/><path fill="#3cb838" stroke="#187818" d="m7 7 6-6 3 2v17l-3 3H7z"/><path fill="#3c90e4" stroke="#185cac" d="m13 7 6-6h5v17l-5 5h-6z"/><path fill="#fff" d="m1 6 4-4 2 1-3 3zM8 6l4-4 2 1-3 3zM15 6l4-4h3l-4 4z"/></svg></button>
    <button class="spaced" title="HD3D 工具"><svg viewBox="0 0 24 24"><circle cx="8" cy="15" r="8" fill="#2c74d4" stroke="#1c4c9c"/><path fill="#fff" d="M6 8h4v3H6zM5 12h5v7h1v2H5v-2h2v-5H5z"/><path fill="none" stroke="#3c64c0" stroke-width="2" d="M9 4q8 0 10 10M9 1q13 0 15 13"/></svg></button>
    <button class="spaced" title="Web 浏览器"><svg viewBox="0 0 24 24"><path fill="#f4f8ff" stroke="#3c6cb4" stroke-width="1.4" d="M3 1h12l6 6v16H3z"/><path fill="#c8dcf8" stroke="#3c6cb4" d="M15 1v6h6z"/><circle cx="12" cy="14" r="6" fill="#389a58"/><path fill="#98ccf0" d="m12 9 4 6-5 3-3-2z"/></svg></button>
    <button title="历史记录"><svg viewBox="0 0 24 24"><circle cx="12" cy="12" r="10" fill="#f0f4fc" stroke="#68788c" stroke-width="2"/><path class="ln" stroke-width="2" d="M12 5v7h6"/><path class="ln" d="M12 3v2m0 14v2M3 12h2m14 0h2M6 6l1 1m10 10 1 1m0-12-1 1M7 17l-1 1"/></svg></button>
    <button title="系统材料"><svg viewBox="0 0 24 24"><path fill="url(#gRainbow)" d="M2 2h8v21H2z"/><path stroke="#111" stroke-width="3" d="m12 9 9 12"/><path stroke="#fff" stroke-width="3" d="m8 4 4 5"/></svg></button>
    <button title="Process Studio"><svg viewBox="0 0 24 24"><path fill="#5c90dc" d="M3 3h7v16H3z"/><path stroke="#1c5ca8" d="M3 7h7M3 11h7M3 15h7"/><path class="ln bl" d="M2 19h9m0-12h13M12 12h10"/><path stroke="#111" stroke-width="3" d="m12 9 9 12"/><path stroke="#fff" stroke-width="3" d="m9 4 3 5"/><path fill="#e4c430" d="M1 19h10v2H1z"/></svg></button>
    <button title="加工向导"><svg viewBox="0 0 24 24"><path fill="#a8b0b8" stroke="#444" d="M9 4q5-4 12-1l-1 3-5-1-1 6-5 1 4 4 5 2v3H5l-3-2 7-6z"/><path fill="#f0a030" d="M2 18h7v5H2z"/></svg></button>
    <button title="角色"><svg viewBox="0 0 24 24"><path fill="#f2f2f2" stroke="#666" d="M1 3h7v17l-5 3H1z"/><path fill="#fff" stroke="#555" stroke-width="1.4" d="M8 3h15v17H8z"/><path fill="#d82030" d="M10 5h12v10H10z"/><path fill="#a0ccf4" d="M13 5h6v6l-3 2-3-2z"/></svg></button>
    <button title="系统场景"><svg viewBox="0 0 24 24"><path fill="#f2f2f2" stroke="#666" d="M1 3h7v17l-5 3H1z"/><path fill="#fff" stroke="#555" stroke-width="1.4" d="M8 3h15v17H8z"/><circle cx="12" cy="7" r="2" fill="#3068d0"/><circle cx="12" cy="11" r="2" fill="#d83030"/><circle cx="12" cy="16" r="2" fill="#30a048"/><path class="ln" d="M16 7h5m-5 4h5m-5 5h5"/></svg></button>
  </aside>

  <section class="viewport" aria-label="图形窗口">
    <svg class="bottle" viewBox="0 0 720 1380" aria-label="瓶子">
      <defs>
        <linearGradient id="gBody" gradientUnits="userSpaceOnUse" x1="90" y1="800" x2="620" y2="872"><stop offset="0" stop-color="#1f0a0e"/><stop offset=".07" stop-color="#4c1c1e"/><stop offset=".18" stop-color="#5a2022"/><stop offset=".36" stop-color="#321314"/><stop offset=".6" stop-color="#4c1c1c"/><stop offset=".82" stop-color="#7a2d2c"/><stop offset=".94" stop-color="#6a2526"/><stop offset="1" stop-color="#240a0f"/></linearGradient>
        <radialGradient id="gDome" gradientUnits="userSpaceOnUse" cx="480" cy="215" r="440"><stop offset="0" stop-color="#ff8578"/><stop offset=".14" stop-color="#ee6259"/><stop offset=".4" stop-color="#b84540"/><stop offset=".7" stop-color="#84322f"/><stop offset="1" stop-color="#481a1c"/></radialGradient>
        <radialGradient id="gGlow" gradientUnits="userSpaceOnUse" cx="0" cy="0" r="1" gradientTransform="translate(350 265) rotate(-58) scale(170 62)"><stop offset="0" stop-color="#ff7268" stop-opacity=".7"/><stop offset="1" stop-color="#f0645c" stop-opacity="0"/></radialGradient>
        <linearGradient id="gShade" x1="0" y1="0" x2="0" y2="1"><stop offset=".55" stop-color="#240a0c" stop-opacity="0"/><stop offset="1" stop-color="#240a0c" stop-opacity=".6"/></linearGradient>
        <linearGradient id="gMouth"><stop offset="0" stop-color="#6c5456"/><stop offset=".5" stop-color="#b09294"/><stop offset="1" stop-color="#7c4448"/></linearGradient>
        <linearGradient id="gNeck"><stop offset="0" stop-color="#2c0e12"/><stop offset=".4" stop-color="#5c2224"/><stop offset="1" stop-color="#30080e"/></linearGradient>
      </defs>
      <path fill="#120609" d="M54 1170q0 66 36 76l36-6 8 54q60 40 146 48 6-58 42-58 32 2 34 58 80 4 146-36l12-38q34 6 40-16l8-100z"/>
      <path fill="url(#gBody)" d="M146 492Q124 640 62 1098l-8 80q4 40 26 54 4-36 28-34 20 2 18 48l8 46q58 34 142 42 10-56 48-56 36 4 38 56 78 0 130-34l16-32q10-44 44-48l12-56 80-604z"/>
      <path fill="none" stroke="#a83d3b" stroke-width="21" d="M64 1110c10 20 38 12 62 40 36 44 60 86 118 90 44 0 50-22 94-18 40 4 40 26 94 26 58-4 80-86 130-92"/>
      <path fill="none" stroke="#fa6a63" stroke-width="11" d="M62 1112c10 20 40 12 64 40 36 44 60 86 118 90 44 0 50-22 94-18 40 4 40 26 94 26 58-4 80-86 130-92"/>
      <path fill="none" stroke="#260b0e" stroke-width="8" opacity=".7" d="M130 1134c36 44 60 84 114 86 44 0 50-18 94-14 40 4 46 24 94 22 34-6 54-44 80-62"/>
      <path fill="#451b1b" stroke="#2a0f11" stroke-width="11" d="M334 706q4-16 22-14l100 6q30 2 26 36l-56 370q-4 26-28 24l-96-2q-22-2-18-28z"/>
      <path fill="none" stroke="#8f3533" stroke-width="9" d="m322 712-48 386"/>
      <path fill="none" stroke="#a83d3b" stroke-width="26" stroke-linecap="round" d="M276 1110q2 24 34 24l78 2q30 2 34-20M97 1012q4 48 76 74M568 1052q-18 44-48 56"/>
      <path fill="none" stroke="#fa6b62" stroke-width="14" stroke-linecap="round" d="M274 1114q4 22 34 22l80 2q28 2 34-20M98 1014q4 46 74 71M568 1054q-18 42-48 54"/>
      <path fill="none" stroke="#160709" stroke-width="6" d="M142 610 98 1000M630 624 580 1040"/>
      <path fill="#14080a" d="m146 588 14 0-4 20-8-2z"/>
      <path fill="none" stroke="#b5413e" stroke-width="28" d="M150 506c42 108 190 148 290 148 106-2 180-38 197-80"/>
      <path fill="none" stroke="#fc6862" stroke-width="14" d="M149 512c42 104 190 146 290 146 106-2 182-40 199-82"/>
      <path fill="url(#gDome)" d="M148 500C142 330 240 170 372 145l148 18c80 46 136 170 136 282q0 70-16 118c-40 46-140 76-214 68-120-12-226-52-278-131z"/>
      <path fill="url(#gShade)" d="M148 500C142 330 240 170 372 145l148 18c80 46 136 170 136 282q0 70-16 118c-40 46-140 76-214 68-120-12-226-52-278-131z"/>
      <path fill="url(#gGlow)" d="M160 150h380v300H160z"/>
      <path fill="none" stroke="#1c090b" stroke-width="8" d="M154 508c60 84 172 116 272 124 70 4 168-16 212-64"/>
      <path fill="url(#gNeck)" d="m374 94-6 86q30 28 90 27 46 0 62-15l8-96z"/>
      <path fill="none" stroke="#f4e8dc" stroke-width="6" d="M374 108q26 34 80 36 50 0 74-20M370 136q30 34 84 34 48 0 70-24"/>
      <ellipse cx="454" cy="86" rx="74" ry="39" fill="url(#gMouth)" stroke="#d84c4c" stroke-width="10" transform="rotate(5 454 86)"/>
    </svg>
    <svg class="cursor" viewBox="0 0 34 34"><path stroke="#111" stroke-width="4" d="M17 1v32M1 17h32"/><path stroke="#fff" stroke-width="2" d="M17 1v32M1 17h32"/><circle cx="17" cy="17" r="4" fill="#8a3333" stroke="#fff" stroke-width="2"/><path stroke="#111" d="M17 12v10M12 17h10"/></svg>
    <div class="tip" role="tooltip">缝合(21)</div>
    <svg class="triad" viewBox="0 0 70 64"><path fill="#d6d7d8" stroke="#bcbec0" d="M13 14h20l5 1 2 15-2 20-25-2zM12 28l28 2M12 37l27 1M38 15l-2 35"/><path stroke="#3f8f4c" stroke-width="2" d="M10 50 5 27"/><path fill="#3f8f4c" d="m2 30 3-8 3 7z"/><path stroke="#1428a0" stroke-width="3" d="m9 49 3-30"/><path fill="#1428a0" d="m9 23 4-11 3 11z"/><path stroke="#cc2a34" stroke-width="2" d="m10 50 34 2"/><path fill="#cc2a34" d="m42 48 10 4-10 3z"/><circle cx="9" cy="50" r="5" fill="#c2c4c6"/><circle cx="8" cy="49" r="2" fill="#fff"/><text x="10" y="11" fill="#2438c0">Z</text><text x="1" y="28" fill="#3f8f4c">Y</text><text x="55" y="58" fill="#cc2a34">X</text></svg>
    <button class="badge" title="加速球">46</button>
    <figure class="qr" aria-label="公众号二维码">
      <svg id="qr" viewBox="0 0 37 37"></svg>
      <figcaption><svg viewBox="0 0 24 20"><path class="ln" stroke-width="2" d="M1 4q7 0 8 6 3-8 10-8"/><path class="ln" d="M5 7v11M9 10v8M14 7v10M3 1q4 1 6 5"/><path fill="#222" d="M15 1q8 4 7 10t-9 8q6-4 6-9t-4-9z"/></svg><b>明辉教育</b></figcaption>
    </figure>
  </section>
</main>

<footer class="banner">
  <p class="teacher">指导老师微信：<span>UG3311</span></p>
  <p class="offer">软件远程安装<span>+</span>模具图档免费领取<span>+</span>问题远程一对一解答请关注微信公众号：<span>UG565656</span></p>
</footer>
<script src="qr.js"></script>
</body>
</html>
```
FILE: styles.css
```css
* { box-sizing: border-box; }
body {
  margin: 0;
  min-height: 100vh;
  display: flex;
  flex-direction: column;
  overflow-x: clip;
  background: #fff;
  color: #111;
  font-family: "Noto Sans", "Noto Sans CJK SC", sans-serif;
  font-size: 11px;
}
button { border: 0; padding: 0; background: none; font: inherit; color: inherit; }
svg { display: block; flex: none; }
.defs { position: absolute; width: 0; height: 0; }

.ln { fill: none; stroke: #3c3c3c; stroke-linejoin: round; }
.ln.rd { stroke: #c83248; }
.ln.bl { stroke: #3038a8; }
.ln.gn { stroke: #2f9a50; }
.ln.or { stroke: #e8743a; }
.ln.pu { stroke: #8a3f9c; }
.ln.gy { stroke: #a4a4a4; }
.dot { fill: #b8283c; }
.yel { fill: #ffe83c; stroke: #333; }
.off .ln, .off .ol { stroke: #c0c0c0; }

/* Title and menu */
.titlebar { display: flex; align-items: center; height: 26px; padding-right: 6px; }
.nx {
  width: 42px;
  height: 22px;
  padding-left: 3px;
  border-right: 1px solid #ddd;
  color: #8496a4;
  font: bold 22px/22px "Liberation Sans", sans-serif;
}
.caption { margin: 0 auto 0 4px; font-size: 12px; font-weight: 400; white-space: pre; }
.brand { color: #128c8e; font: bold 13px/16px "Noto Sans", sans-serif; margin-right: 26px; }
.winbtns { display: flex; gap: 7px; margin-left: auto; }
.winbtns button { width: 16px; height: 16px; }
.winbtns svg { width: 12px; height: 12px; margin: 2px; }
.brand + .winbtns { margin-left: 0; }
.winbtns .ln { stroke: #555; stroke-width: 1.6; }
.winbtns.dark { gap: 2px; }
.dark .ln { stroke: #1c2426; stroke-width: 2; }
.menubar {
  display: flex;
  align-items: center;
  gap: 15px;
  height: 27px;
  padding: 0 5px 3px 3px;
  border-left: 2px dotted #9aa6a6;
  background: #c8d6d6;
  color: #1c2c2c;
}
.menubar > button { white-space: nowrap; }
.menubar .wide { margin-right: 3px; }
.part { width: 16px; height: 16px; margin-right: -7px; }

/* Tool bars */
.bars { border-bottom: 1px solid #8c8c8c; }
.row { display: flex; height: 34px; }
.toolbar {
  display: flex;
  align-items: center;
  padding-right: 1px;
  border: solid #dfe1e3;
  border-width: 0 1px 1px 0;
}
.apart { margin-left: 4px; }
.far { margin-left: 19px; }
.grip { flex: none; width: 2px; height: 26px; margin: 0 2px 0 3px; border-left: 2px dotted #a8a8a8; }
.sep { flex: none; width: 2px; height: 26px; margin: 0 2px; border-right: 1px solid #d2d4d6; }
.tool { display: flex; flex: none; align-items: center; justify-content: center; width: 31px; height: 26px; }
.tool svg, .start svg, .resources svg { width: 22px; height: 22px; }
.picked { background: linear-gradient(90deg, #fff 3px, #cfe6ea 3px, #cfe6ea 28px, #fff 28px); }
.letter { font: bold 24px/26px "Liberation Serif", serif; color: #3c3c3c; }
.start { display: flex; align-items: center; gap: 5px; width: 54px; padding-left: 5px; white-space: nowrap; }
.drop { position: relative; flex: none; width: 12px; height: 24px; }
.drop::after {
  content: "";
  display: block;
  margin: 1px auto 0;
  width: 0;
  border: solid transparent;
  border-width: 3px 3px 0;
  border-top-color: #111;
}
.more::after { margin-top: 14px; }
.search {
  display: flex;
  align-items: center;
  width: 125px;
  height: 20px;
  margin: 0 5px 0 4px;
  border: 1px solid #9c9c9c;
}
.search input { flex: 1; min-width: 0; border: 0; padding: 0 2px; outline: 0; font: inherit; color: inherit; }
.search svg { width: 15px; height: 15px; margin-right: 1px; }
.selection { height: 31px; align-items: center; padding: 1px 3px 0 5px; }
.selection select {
  width: 132px;
  height: 20px;
  margin-right: 8px;
  padding: 0 2px;
  border: 1px solid #9c9c9c;
  border-radius: 0;
  appearance: none;
  background-color: #fff;
  background-image: linear-gradient(to bottom right, #111 50%, transparent 50%), linear-gradient(to bottom left, #111 50%, transparent 50%);
  background-size: 4px 4px;
  background-position: right 4px center, right 8px center;
  background-repeat: no-repeat;
  font: inherit;
  color: inherit;
}
.selection .scope { width: 139px; margin-right: 5px; }
.selection .sep { margin-right: 3px; }
.mini { display: flex; flex: none; align-items: center; justify-content: center; width: 22px; height: 22px; }
.mini svg { width: 16px; height: 16px; }
.snap { width: 23px; border: 1px solid transparent; }
.snap.on { background: #c8d8d8; border-color: #a8b8b8; }
.last { margin-left: auto; }

/* Work area */
.workspace { display: flex; flex: 1; border-bottom: 1px solid #a8a8a8; margin-bottom: 3px; }
.resources {
  display: flex;
  flex-direction: column;
  width: 32px;
  border-right: 1px solid #a4a4a4;
  background: #dcddde;
}
.resources button { display: flex; align-items: center; justify-content: center; height: 42px; padding-left: 3px; }
.resources .gear { height: 26px; margin-bottom: 14px; padding: 0; }
.resources .gear svg { width: 14px; height: 14px; }
.resources .active { height: 44px; margin: 0 -1px 0 2px; padding-left: 0; background: #fff; border: 1px solid #b4b4b4; border-right: 0; }
.resources .spaced { margin-bottom: 12px; }
.viewport {
  position: relative;
  flex: 1;
  margin-left: 6px;
  background: linear-gradient(#b5b5b6, #c6c7c9 24%, #d6d7d9 50%, #e5e6e8 72%, #e7e8ea);
}
.bottle { position: absolute; left: 842px; top: 153px; width: 240px; height: 460px; }
.cursor { position: absolute; left: 992px; top: 283px; width: 34px; height: 34px; }
.tip {
  position: absolute;
  left: 988px;
  top: 321px;
  width: 62px;
  border: 1px solid #c9a9a9;
  background: rgba(226, 205, 205, .85);
  color: #4c3434;
  font-size: 12px;
  line-height: 23px;
  text-align: center;
}
.triad { position: absolute; left: 57px; top: 714px; width: 70px; height: 64px; font: 12px "Liberation Sans", sans-serif; }
.badge {
  position: absolute;
  right: -29px;
  top: 273px;
  width: 48px;
  height: 48px;
  padding-left: 4px;
  border: 2px solid #f0f4f0;
  border-radius: 50%;
  outline: 1px solid #7c8c80;
  background: linear-gradient(#62d67c, #2cae4c);
  color: #fff;
  font: bold 12px "Noto Sans", sans-serif;
  text-align: left;
}
.qr {
  position: absolute;
  right: -2px;
  bottom: -4px;
  width: 248px;
  height: 248px;
  margin: 0;
  padding: 19px 17px;
  border: 2px solid #0c0c0c;
  background: #fff;
}
#qr { width: 207px; height: 207px; }
.qr figcaption {
  position: absolute;
  left: 94px;
  top: 95px;
  width: 55px;
  height: 55px;
  padding-top: 7px;
  border-radius: 6px;
  background: #fcfcfc;
  text-align: center;
}
.qr figcaption svg { width: 24px; height: 20px; margin: 0 auto; }
.qr b { display: block; font-weight: 900; font-size: 11px; line-height: 16px; }

/* Bottom banner */
.banner {
  display: flex;
  height: 58px;
  border-top: 2px solid #155058;
  background: #10395c;
  color: #fff;
  font: bold 36px/54px "Liberation Sans", "Noto Sans CJK SC", sans-serif;
  white-space: nowrap;
}
.banner p { margin: 0; }
.teacher { width: 448px; padding-left: 20px; }
.teacher span { font-size: 41px; }
.offer {
  flex: 1;
  padding-left: 54px;
  background: #17a808;
  clip-path: polygon(44px 0, 100% 0, 100% 100%, 0 100%);
}
.offer span { font-size: 43px; }
```
FILE: qr.js
```js
// Modules of the code, one string per row; 1 is dark.
const rows = [
  "1111111000111001110010010110001111111",
  "1000001010011001100100001110101000001",
  "1011101011010001101001001110101011101",
  "1011101011010111010110100110101011101",
  "1011101010011000010010001011100001011101".slice(0, 28) + "001011101",
  "1000001010010011011010101010001000001",
  "1111111010101010101010101010101111111",
  "0000000001011010011110101011100000000",
  "0010011111001111110101010100011111100",
  "0000110101111101100111101000111100101",
  "1110011010111001110001101101101011011",
  "1000010110011111111111010010111100101",
  "1010001001111111111111001101100010001",
  "1000000110100111101101001011111001011",
  "1111101001111100000000000011101010011",
  "1001101101011100000000001010111000010",
  "0111100100111100000000010111100001000",
  "1001111011110100000000001000111010110",
  "0110110100111100000000001111011001010",
  "1011001110011100000000011011101110001",
  "1110101000111000000000000100110101111",
  "0101100101011100000000010101111000110",
  "1010011010001100000000001001010110001",
  "1111001101100010101100111100111000110",
  "0100111001101001100010100101011101111",
  "1011100110011011010010101110110010011",
  "1101010111100101110001010011011101101",
  "0010110010110011110101101100101100011",
  "1110011000110101101011100001111110011",
  "0000000010010101100100111101100011101",
  "1111111011101010011110010011101011110",
  "1000001011010110000000010101100011001",
  "1011101000111001011010010011111110010",
  "1011101011010110001101001000000000111",
  "1011101001110101001011111010001011001",
  "1000001000100111111110110101100110110",
  "1111111000100100101100110011101011001"
];
let d = "";
rows.forEach((row, y) => {
  for (const run of row.matchAll(/1+/g)) {
    d += `M${run.index} ${y}h${run[0].length}v1h-${run[0].length}z`;
  }
});
const path = document.createElementNS("http://www.w3.org/2000/svg", "path");
path.setAttribute("d", d);
path.setAttribute("fill", "#0a0a0a");
document.getElementById("qr").append(path);
```
